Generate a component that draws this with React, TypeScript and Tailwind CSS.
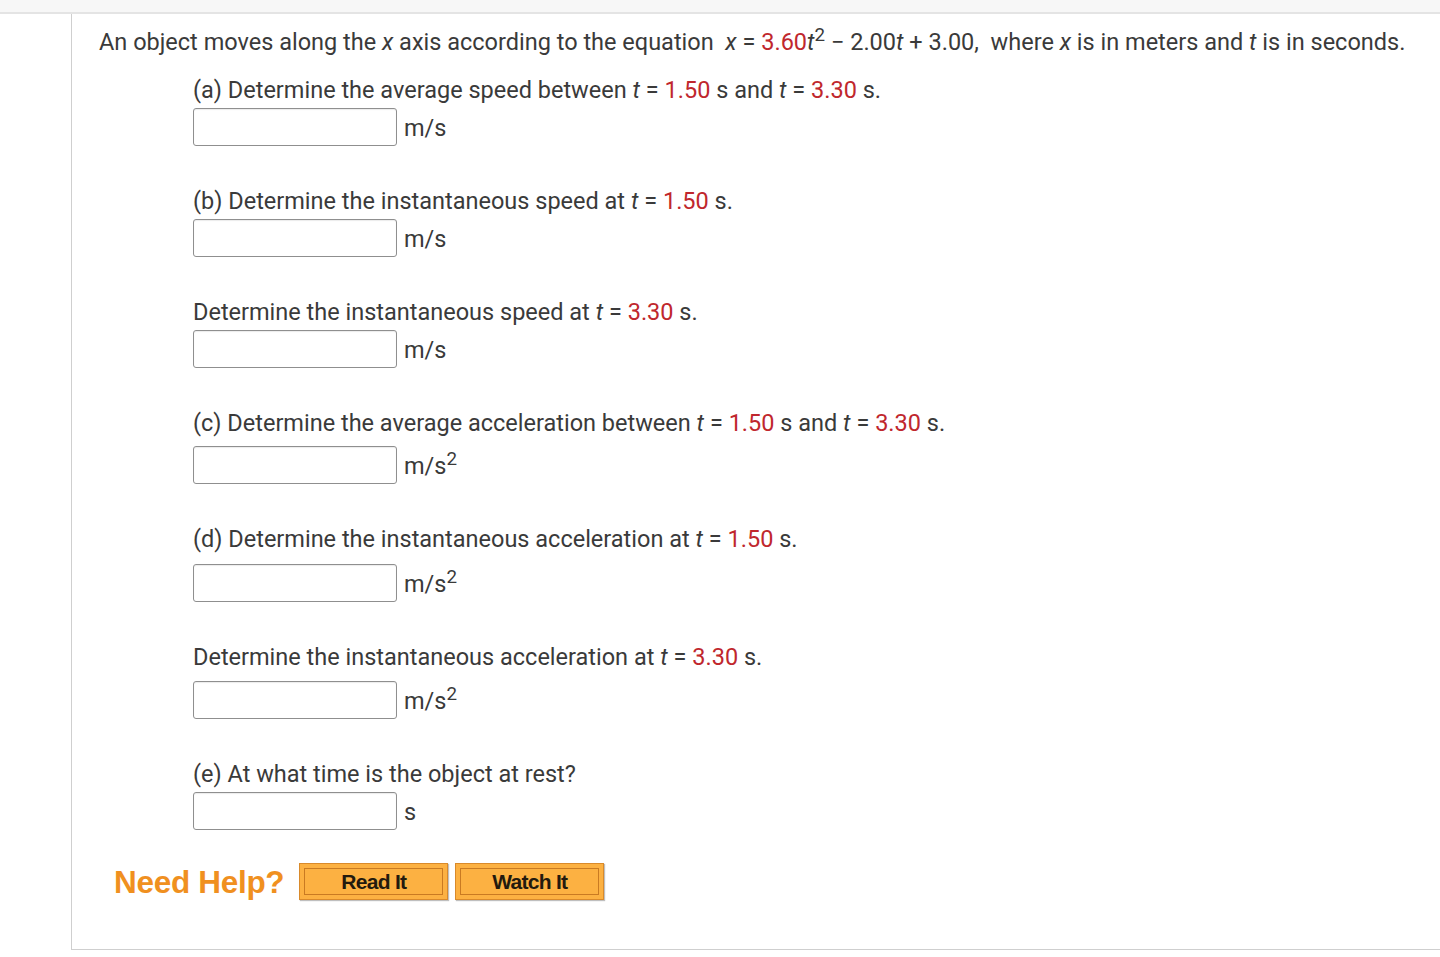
import React from 'react';

type Part = { t: string; red?: boolean; it?: boolean; sup?: boolean };

const Txt: React.FC<{ parts: Part[] }> = ({ parts }) => (
  <>
    {parts.map((p, i) => {
      if (p.sup) return <sup key={i} className="text-[0.8em] top-[-0.5em]">{p.t}</sup>;
      if (p.red) return <span key={i} className="text-[#c0272d]">{p.t}</span>;
      if (p.it) return <i key={i}>{p.t}</i>;
      return <span key={i}>{p.t}</span>;
    })}
  </>
);

interface Section {
  parts: Part[];
  unit: 'm/s' | 'm/s2' | 's';
  inputGap: string;
}

const sections: Section[] = [
  {
    parts: [{ t: '(a) Determine the average speed between ' }, { t: 't', it: true }, { t: ' = ' }, { t: '1.50', red: true }, { t: ' s and ' }, { t: 't', it: true }, { t: ' = ' }, { t: '3.30', red: true }, { t: ' s.' }],
    unit: 'm/s',
    inputGap: 'mt-[5px]',
  },
  {
    parts: [{ t: '(b) Determine the instantaneous speed at ' }, { t: 't', it: true }, { t: ' = ' }, { t: '1.50', red: true }, { t: ' s.' }],
    unit: 'm/s',
    inputGap: 'mt-[5px]',
  },
  {
    parts: [{ t: 'Determine the instantaneous speed at ' }, { t: 't', it: true }, { t: ' = ' }, { t: '3.30', red: true }, { t: ' s.' }],
    unit: 'm/s',
    inputGap: 'mt-[5px]',
  },
  {
    parts: [{ t: '(c) Determine the average acceleration between ' }, { t: 't', it: true }, { t: ' = ' }, { t: '1.50', red: true }, { t: ' s and ' }, { t: 't', it: true }, { t: ' = ' }, { t: '3.30', red: true }, { t: ' s.' }],
    unit: 'm/s2',
    inputGap: 'mt-[10px]',
  },
  {
    parts: [{ t: '(d) Determine the instantaneous acceleration at ' }, { t: 't', it: true }, { t: ' = ' }, { t: '1.50', red: true }, { t: ' s.' }],
    unit: 'm/s2',
    inputGap: 'mt-[12px]',
  },
  {
    parts: [{ t: 'Determine the instantaneous acceleration at ' }, { t: 't', it: true }, { t: ' = ' }, { t: '3.30', red: true }, { t: ' s.' }],
    unit: 'm/s2',
    inputGap: 'mt-[11px]',
  },
  {
    parts: [{ t: '(e) At what time is the object at rest?' }],
    unit: 's',
    inputGap: 'mt-[5px]',
  },
];

const HelpButton: React.FC<{ label: string }> = ({ label }) => (
  <button className="w-[149px] h-[37px] p-[4px] bg-[#fcb142] border border-[#d98a2b] shadow-[1px_1px_1px_rgba(0,0,0,0.25)]">
    <div className="w-full h-full border border-[#c97a22] flex items-center justify-center font-['Liberation_Sans',Arial,sans-serif] font-bold text-[21px] text-[#231a0e] tracking-[-0.7px]">
      {label}
    </div>
  </button>
);

export default function App() {
  return (
    <div className="w-full h-[957px] bg-white font-['Roboto',sans-serif] text-[23.5px] leading-[26px] text-[#3a3a3a]">
      <div className="h-[14px] bg-[#f7f7f7] border-b-2 border-[#e4e4e4]" />
      <div className="ml-[71px] h-[936px] border-l border-b border-[#cfcfcf] pl-[27px] pt-[15px]">
        <p className="whitespace-pre">
          <Txt
            parts={[
              { t: 'An object moves along the ' },
              { t: 'x', it: true },
              { t: ' axis according to the equation  ' },
              { t: 'x', it: true },
              { t: ' = ' },
              { t: '3.60', red: true },
              { t: 't', it: true },
              { t: '2', sup: true },
              { t: ' − 2.00' },
              { t: 't', it: true },
              { t: ' + 3.00,  where ' },
              { t: 'x', it: true },
              { t: ' is in meters and ' },
              { t: 't', it: true },
              { t: ' is in seconds.' },
            ]}
          />
        </p>

        <div className="pl-[94px] mt-[22px] flex flex-col gap-[42px]">
          {sections.map((s, i) => (
            <div key={i}>
              <p>
                <Txt parts={s.parts} />
              </p>
              <div className={`flex items-end ${s.inputGap}`}>
                <input
                  type="text"
                  className="w-[204px] h-[38px] border border-[#8f8f8f] rounded-[3px] bg-white shadow-[inset_0_1px_1px_rgba(0,0,0,0.08)] outline-none"
                />
                <span className="ml-[7px] mb-[5px] leading-[26px]">
                  {s.unit === 'm/s2' ? (
                    <>
                      m/s<sup className="text-[0.8em] top-[-0.5em]">2</sup>
                    </>
                  ) : (
                    s.unit
                  )}
                </span>
              </div>
            </div>
          ))}
        </div>

        <div className="mt-[33px] ml-[15px] flex items-center">
          <span className="font-['Liberation_Sans',Arial,sans-serif] font-bold text-[31.5px] text-[#f0901f] tracking-[-0.3px]">
            Need Help?
          </span>
          <div className="ml-[15px] flex gap-[7px]">
            <HelpButton label="Read It" />
            <HelpButton label="Watch It" />
          </div>
        </div>
      </div>
    </div>
  );
}
